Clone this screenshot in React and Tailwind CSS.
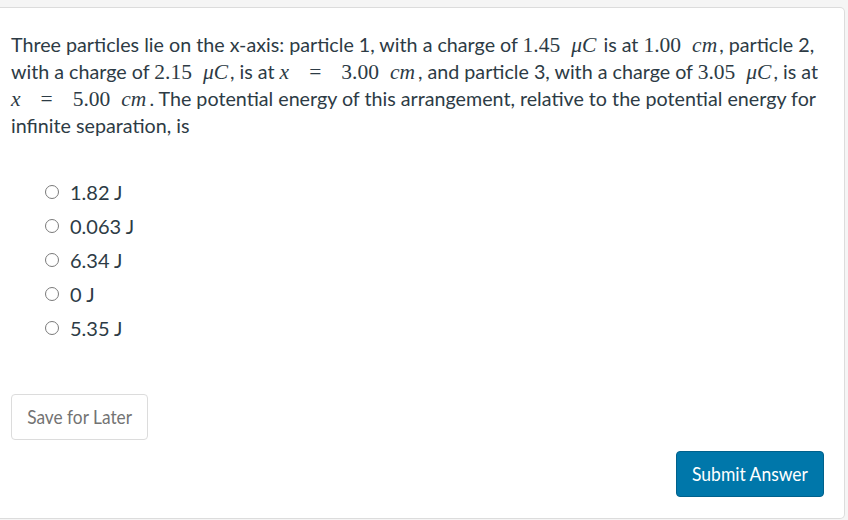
import React, { useState } from "react";

const options = ["1.82 J", "0.063 J", "6.34 J", "0 J", "5.35 J"];

// MathJax-like inline quantity: number, gap, italic unit
const Qty = ({ n, u }) => (
  <span className="whitespace-nowrap font-['Liberation_Serif',serif] text-[21.5px] leading-[18px] mr-[2px]">
    {n}
    <span className="italic ml-[11px]">{u}</span>
  </span>
);

const Pos = ({ n }) => (
  <span className="whitespace-nowrap font-['Liberation_Serif',serif] text-[21.5px] leading-[18px] mr-[3px]">
    <span className="italic">x</span>
    <span className="ml-[20px]">=</span>
    <span className="ml-[20px]">{n}</span>
    <span className="italic ml-[11px]">cm</span>
  </span>
);

const App = () => {
  const [choice, setChoice] = useState(null);

  return (
    <div className="min-h-screen bg-[#f5f5f5] pt-[7px] font-['Lato',sans-serif]">
      <div className="bg-white border-t border-r border-b border-[#dcdcdc] rounded-tr-[5px] rounded-br-[5px] w-[845px] h-[512px] flex flex-col pl-[11px] pr-[20px]">
        <p className="mt-[23px] text-[19.7px] leading-[27px] text-[#2d3b45]">
          Three particles lie on the x-axis: particle 1, with a charge of <Qty n="1.45" u="μC" /> is at{" "}
          <Qty n="1.00" u="cm" />, particle 2, with a charge of <Qty n="2.15" u="μC" />, is at <Pos n="3.00" />, and
          particle 3, with a charge of <Qty n="3.05" u="μC" />, is at <Pos n="5.00" />. The potential energy of this
          arrangement, relative to the potential energy for infinite separation, is
        </p>

        <div className="mt-[41px] pl-[34px] flex flex-col gap-[10px]">
          {options.map((o, i) => (
            <label key={o} className="flex items-center h-[24px] text-[20px] text-[#2d3b45] cursor-pointer">
              <input
                type="radio"
                name="ans"
                checked={choice === i}
                onChange={() => setChoice(i)}
                className="appearance-none w-[14px] h-[14px] m-0 rounded-full border border-[#7a7a7a] bg-white checked:border-[4px] checked:border-[#0077aa]"
              />
              <span className="ml-[11px]">{o}</span>
            </label>
          ))}
        </div>

        <div className="mt-[54px]">
          <button className="h-[46px] w-[137px] border border-[#dcdcdc] rounded-[4px] bg-white text-[19px] text-[#737373]">
            <span className="inline-block scale-x-[0.91]">Save for Later</span>
          </button>
        </div>

        <div className="mt-[11px] flex justify-end">
          <button className="h-[46px] w-[148px] rounded-[4px] bg-[#0077aa] border border-[#00618c] text-[19px] text-white">
            <span className="inline-block scale-x-[0.92]">Submit Answer</span>
          </button>
        </div>
      </div>
    </div>
  );
};

export default App;
